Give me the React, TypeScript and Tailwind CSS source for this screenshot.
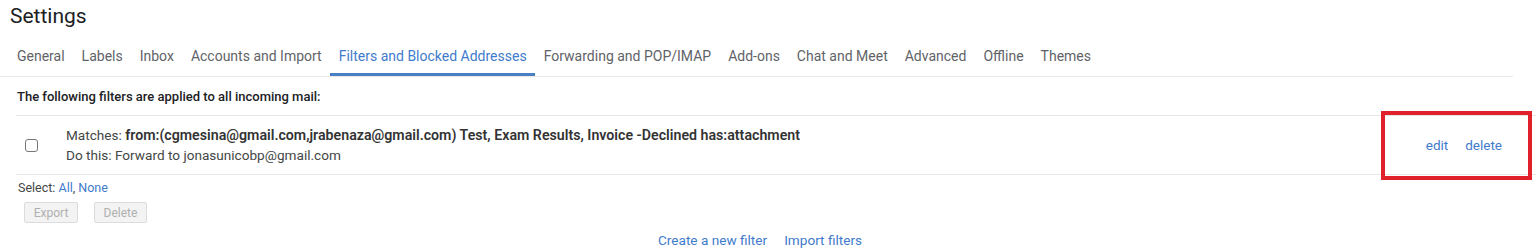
const tabs = [
  "General",
  "Labels",
  "Inbox",
  "Accounts and Import",
  "Filters and Blocked Addresses",
  "Forwarding and POP/IMAP",
  "Add-ons",
  "Chat and Meet",
  "Advanced",
  "Offline",
  "Themes",
];

export default function App() {
  return (
    <div className="relative h-[250px] w-[1536px] overflow-hidden bg-white font-['Roboto','Liberation_Sans',sans-serif] text-[#202124]">
      {/* Header */}
      <h1 className="pl-[10px] pt-[3px] text-[21px] leading-[26px] font-normal text-[#202124]">Settings</h1>

      {/* Tabs */}
      <div className="mt-[19px] flex w-[1513px] border-b border-[#e8e8e8] pl-[8.5px]">
        {tabs.map((t) => {
          const active = t === "Filters and Blocked Addresses";
          return (
            <div
              key={t}
              className={`px-[8.5px] pb-[8px] text-[14px] leading-[17px] ${
                active ? "border-b-[3px] border-[#4a7fc4] pb-[5px] text-[#3f7bcc]" : "text-[#5f6368]"
              }`}
            >
              {t}
            </div>
          );
        })}
      </div>

      {/* Filters */}
      <div className="pl-[17px] pt-[11px] text-[13px] leading-[17px] font-medium text-[#202124]">
        The following filters are applied to all incoming mail:
      </div>

      <div className="mt-[10px] ml-[16px] border-t border-b border-[#e6e6e6]">
        <div className="flex h-[58px] items-center">
          <div className="w-[50px] pl-[9px]">
            <div className="h-[13px] w-[13px] rounded-[3px] border border-[#767676] bg-white" />
          </div>
          <div className="flex-1 text-[13.6px] leading-[20px] text-[#444746]">
            <div>
              Matches:{" "}
              <span className="text-[14.2px] font-semibold text-[#333]">
                from:(cgmesina@gmail.com,jrabenaza@gmail.com) Test, Exam Results, Invoice -Declined has:attachment
              </span>
            </div>
            <div>Do this: Forward to jonasunicobp@gmail.com</div>
          </div>
          <div className="flex gap-[17px] pr-[34px] text-[13.5px] text-[#3f7bcc]">
            <span>edit</span>
            <span>delete</span>
          </div>
        </div>
      </div>

      <div className="pl-[18px] pt-[5px] text-[12.5px] leading-[16px] text-[#444746]">
        Select: <span className="text-[#3f7bcc]">All</span>, <span className="text-[#3f7bcc]">None</span>
      </div>
      <div className="mt-[6px] flex gap-[16px] pl-[24px]">
        <div className="flex h-[21px] w-[54px] items-center justify-center rounded-[2px] border border-[#dcdcdc] bg-[#f3f3f3] text-[12px] text-[#b0b0b0]">
          Export
        </div>
        <div className="flex h-[21px] w-[53px] items-center justify-center rounded-[2px] border border-[#dcdcdc] bg-[#f3f3f3] text-[12px] text-[#b0b0b0]">
          Delete
        </div>
      </div>

      <div className="mt-[9px] flex justify-center gap-[17px] pr-[16px] text-[13.6px] leading-[17px] text-[#3f7bcc]">
        <span>Create a new filter</span>
        <span>Import filters</span>
      </div>

      {/* Annotation box */}
      <div className="absolute left-[1381px] top-[111px] h-[69px] w-[151px] border-4 border-[#e0202a]" />
    </div>
  );
}
